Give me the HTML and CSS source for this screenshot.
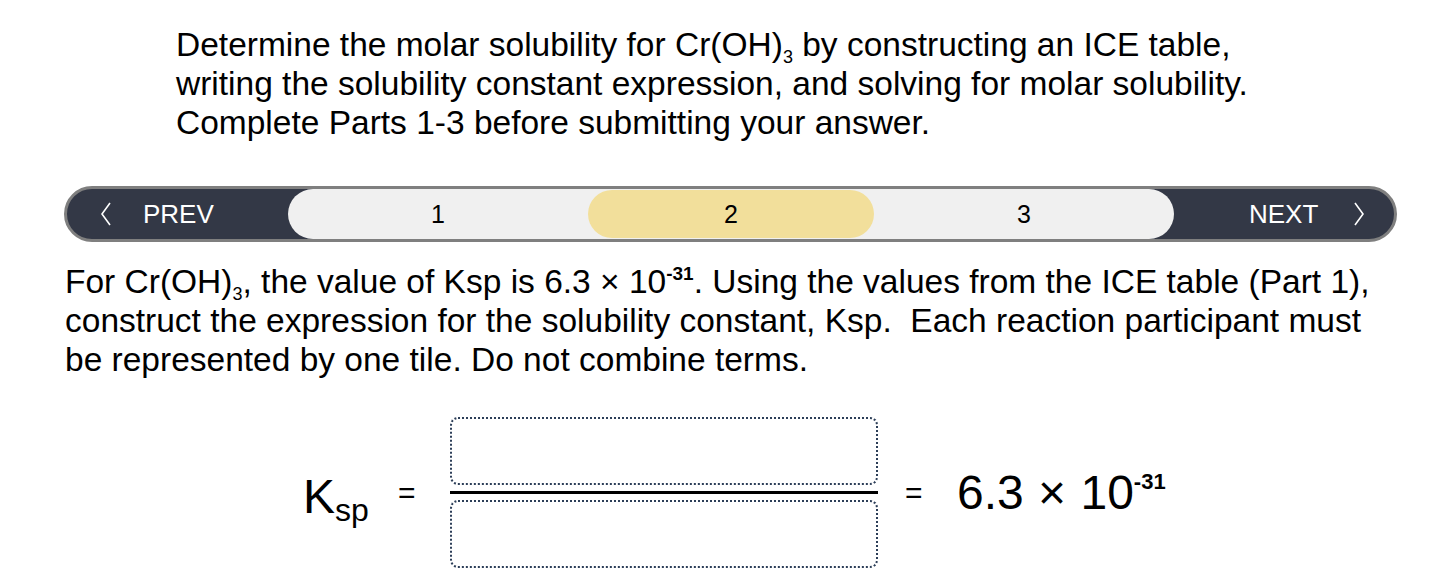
FILE: index.html
```html
<!DOCTYPE html>
<html>
<head>
<meta charset="utf-8">
<link rel="stylesheet" href="styles.css">
</head>
<body>
<div class="page">
  <p class="intro">Determine the molar solubility for Cr(OH)<sub>3</sub> by constructing an ICE table,<br>writing the solubility constant expression, and solving for molar solubility.<br>Complete Parts 1-3 before submitting your answer.</p>

  <div class="nav">
    <div class="side prev">
      <svg class="chev" width="12" height="24" viewBox="0 0 12 24"><polyline points="10,1 2,12 10,23" fill="none" stroke="#fff" stroke-width="1.6"/></svg>
      <span>PREV</span>
    </div>
    <div class="track">
      <div class="step">1</div>
      <div class="step active">2</div>
      <div class="step">3</div>
    </div>
    <div class="side next">
      <span>NEXT</span>
      <svg class="chev" width="12" height="24" viewBox="0 0 12 24"><polyline points="2,1 10,12 2,23" fill="none" stroke="#fff" stroke-width="1.6"/></svg>
    </div>
  </div>

  <p class="question">For Cr(OH)<sub>3</sub>, the value of Ksp is 6.3 × 10<sup>-31</sup>. Using the values from the ICE table (Part 1),<br>construct the expression for the solubility constant, Ksp.&nbsp; Each reaction participant must<br>be represented by one tile. Do not combine terms.</p>

  <div class="equation">
    <div class="ksp">K<sub>sp</sub></div>
    <div class="eq">=</div>
    <div class="fraction">
      <div class="tile"></div>
      <div class="bar"></div>
      <div class="tile"></div>
    </div>
    <div class="eq eq2">=</div>
    <div class="value">6.3 × 10<sup>-31</sup></div>
  </div>
</div>
</body>
</html>
```

FILE: styles.css
```css
html, body {
  margin: 0;
  padding: 0;
  background: #ffffff;
}
.page {
  font-family: "Liberation Sans", Arial, sans-serif;
  color: #000;
  width: 1438px;
  height: 576px;
  overflow: hidden;
}
.intro {
  margin: 0;
  padding: 25px 0 0 176px;
  font-size: 33.5px;
  line-height: 39px;
}
.intro sub, .question sub {
  font-size: 18px;
  line-height: 0;
  vertical-align: -7px;
}
.question sup {
  font-size: 19px;
  font-weight: bold;
  line-height: 0;
  vertical-align: 13px;
}
.nav {
  margin: 44px 0 0 64px;
  width: 1327px;
  height: 50px;
  box-sizing: content-box;
  border: 3px solid #7f7f7f;
  border-radius: 30px;
  background: #333846;
  display: flex;
  color: #fff;
}
.side {
  width: 221px;
  display: flex;
  align-items: center;
  font-size: 26px;
}
.prev {
  padding-left: 33px;
  box-sizing: border-box;
  gap: 31px;
}
.next {
  width: 220px;
  padding-left: 75px;
  box-sizing: border-box;
  gap: 35px;
}
.chev {
  display: block;
}
.track {
  flex: 1;
  background: #f0f0f0;
  border-radius: 25px;
  display: grid;
  grid-template-columns: 300px 286px 300px;
  color: #000;
}
.step {
  display: flex;
  align-items: center;
  justify-content: center;
  font-size: 25px;
}
.active {
  background: #f2df9b;
  border-radius: 24px;
  margin: 1px 0;
}
.question {
  margin: 0;
  padding: 20px 0 0 65px;
  font-size: 33.5px;
  line-height: 39px;
}
.equation {
  display: flex;
  align-items: center;
  padding: 38px 0 0 303px;
}
.ksp {
  font-size: 48px;
  width: 95px;
  padding-top: 8px;
}
.ksp sub {
  font-size: 32px;
  line-height: 0;
  vertical-align: -8px;
}
.eq {
  font-size: 30px;
  width: 52px;
}
.eq2 {
  margin-left: 27px;
  width: 52px;
}
.fraction {
  width: 428px;
  display: flex;
  flex-direction: column;
}
.tile {
  height: 64px;
  border: 2px dotted #2c3e58;
  border-radius: 8px;
}
.bar {
  height: 3px;
  background: #000;
  margin: 6px 0 6px;
}
.value {
  font-size: 48px;
  word-spacing: 1px;
}
.value sup {
  font-size: 22px;
  font-weight: bold;
  line-height: 0;
  vertical-align: 20px;
}
```
